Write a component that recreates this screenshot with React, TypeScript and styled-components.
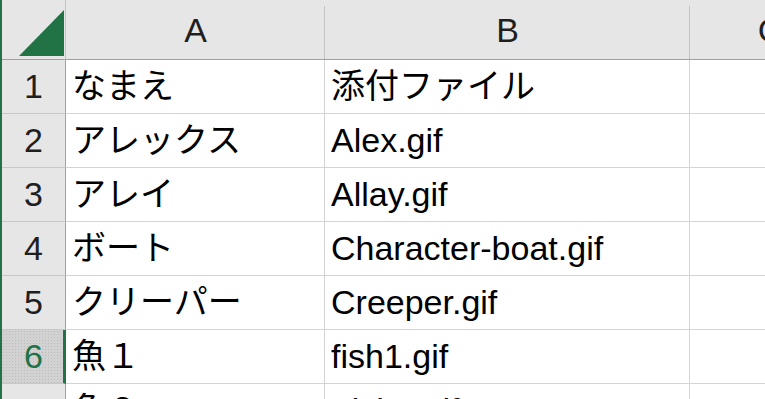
import React from "react";
import styled, { createGlobalStyle, css } from "styled-components";

const GlobalStyle = createGlobalStyle`
  html, body {
    margin: 0;
    padding: 0;
    background: #ffffff;
    overflow: hidden;
  }
`;

const excelGreen = "#217346";

const Sheet = styled.div`
  height: 100vh;
  overflow: hidden;
  border-left: 2px solid ${excelGreen};
  background: #ffffff;
  font-family: "Liberation Sans", "Noto Sans CJK JP", sans-serif;
  font-size: 34px;
  color: #000000;
`;

const Grid = styled.div`
  display: grid;
  grid-template-columns: 64px 259px 365px 160px;
  grid-auto-rows: 54px;
  grid-template-rows: 60px;
  width: max-content;
`;

const Corner = styled.div`
  position: relative;
  background: #e6e6e6;
  border-bottom: 1px solid #a0a0a0;
  border-right: 1px solid #c4c4c4;
  box-sizing: border-box;
`;

const CornerMark = styled.svg`
  position: absolute;
  left: 15px;
  top: 10px;
`;

const ColHeader = styled.div`
  position: relative;
  background: #e6e6e6;
  border-bottom: 1px solid #a0a0a0;
  box-sizing: border-box;
  text-align: center;
  line-height: 59px;
  padding-top: 1px;
  color: #1f1f1f;
  //NOTE - la linea separadora empieza un poco mas abajo del borde superior
  &::after {
    content: "";
    position: absolute;
    top: 6px;
    bottom: 0;
    right: 0;
    width: 1px;
    background: #c4c4c4;
  }
`;

const RowHeader = styled.div<{ $selected?: boolean }>`
  background: #e6e6e6;
  border-bottom: 1px solid #c8c8c8;
  border-right: 1px solid #a0a0a0;
  box-sizing: border-box;
  text-align: center;
  line-height: 53px;
  color: #1f1f1f;
  ${({ $selected }) =>
    $selected &&
    css`
      background-color: #d2d2d2;
      background-image: radial-gradient(#bcbcbc 0.6px, transparent 0.8px);
      background-size: 3px 3px;
      color: ${excelGreen};
      border-right: 3px solid ${excelGreen};
      padding-left: 2px;
    `}
`;

const Cell = styled.div`
  border-bottom: 1px solid #d4d4d4;
  border-right: 1px solid #d4d4d4;
  box-sizing: border-box;
  line-height: 53px;
  padding-left: 6px;
  white-space: nowrap;
  overflow: hidden;
`;

const columns = ["A", "B", "C"];

const rows: [string, string][] = [
  ["なまえ", "添付ファイル"],
  ["アレックス", "Alex.gif"],
  ["アレイ", "Allay.gif"],
  ["ボート", "Character-boat.gif"],
  ["クリーパー", "Creeper.gif"],
  ["魚１", "fish1.gif"],
  ["魚２", "Fish2.gif"],
];

const selectedRow = 6;

export default function App() {
  return (
    <>
      <GlobalStyle />
      <Sheet>
        <Grid>
          <Corner>
            <CornerMark width="48" height="47" viewBox="0 0 48 47">
              <polygon points="2,46 47,46 47,0" fill={excelGreen} />
            </CornerMark>
          </Corner>
          {columns.map((c) => (
            <ColHeader key={c}>{c}</ColHeader>
          ))}
          {rows.map(([name, file], i) => (
            <React.Fragment key={i}>
              <RowHeader $selected={i + 1 === selectedRow}>{i + 1}</RowHeader>
              <Cell>{name}</Cell>
              <Cell>{file}</Cell>
              <Cell />
            </React.Fragment>
          ))}
        </Grid>
      </Sheet>
    </>
  );
}
